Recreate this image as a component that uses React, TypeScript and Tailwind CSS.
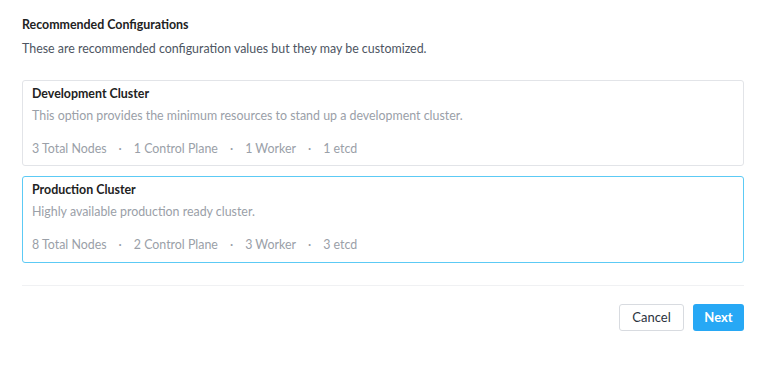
const options = [
  {
    title: 'Development Cluster',
    description: 'This option provides the minimum resources to stand up a development cluster.',
    stats: ['3 Total Nodes', '1 Control Plane', '1 Worker', '1 etcd'],
    selected: false,
  },
  {
    title: 'Production Cluster',
    description: 'Highly available production ready cluster.',
    stats: ['8 Total Nodes', '2 Control Plane', '3 Worker', '3 etcd'],
    selected: true,
  },
];

export default function App() {
  return (
    <div className="h-[365px] w-[768px] bg-white pl-[22px] pr-[24px] pt-[17px] font-['Lato',sans-serif] text-[12.4px]">
      <h2 className="font-bold leading-[16px] text-[#222]">Recommended Configurations</h2>
      <p className="mt-[8px] leading-[16px] text-[#4d5562]">
        These are recommended configuration values but they may be customized.
      </p>

      <div className="mt-[23px] flex flex-col gap-[10px]">
        {options.map((opt) => (
          <div
            key={opt.title}
            className={
              opt.selected
                ? 'h-[87px] rounded-[3px] border border-[#5ccaf5] px-[9px] pt-[5px]'
                : 'h-[86px] rounded-[3px] border border-[#e2e4e8] px-[9px] pt-[5px]'
            }
          >
            <h3 className="font-bold leading-[16px] text-[#222]">{opt.title}</h3>
            <p className="mt-[6px] leading-[16px] text-[#9aa0a8]">{opt.description}</p>
            <div className="mt-[17px] flex items-center leading-[16px] text-[#9aa0a8]">
              {opt.stats.map((s, i) => (
                <span key={s} className="flex items-center">
                  {i > 0 && <span className="px-[12px]">·</span>}
                  {s}
                </span>
              ))}
            </div>
          </div>
        ))}
      </div>

      <div className="mt-[22px] border-t border-[#f0f1f3]" />

      <div className="mt-[18px] flex justify-end gap-[9px]">
        <button className="h-[27px] w-[65px] rounded-[3px] border border-[#d8dbe0] bg-white text-[13px] text-[#2b3340]">
          Cancel
        </button>
        <button className="h-[27px] w-[51px] rounded-[3px] bg-[#27a8f5] text-[13px] font-bold text-white">
          Next
        </button>
      </div>
    </div>
  );
}
